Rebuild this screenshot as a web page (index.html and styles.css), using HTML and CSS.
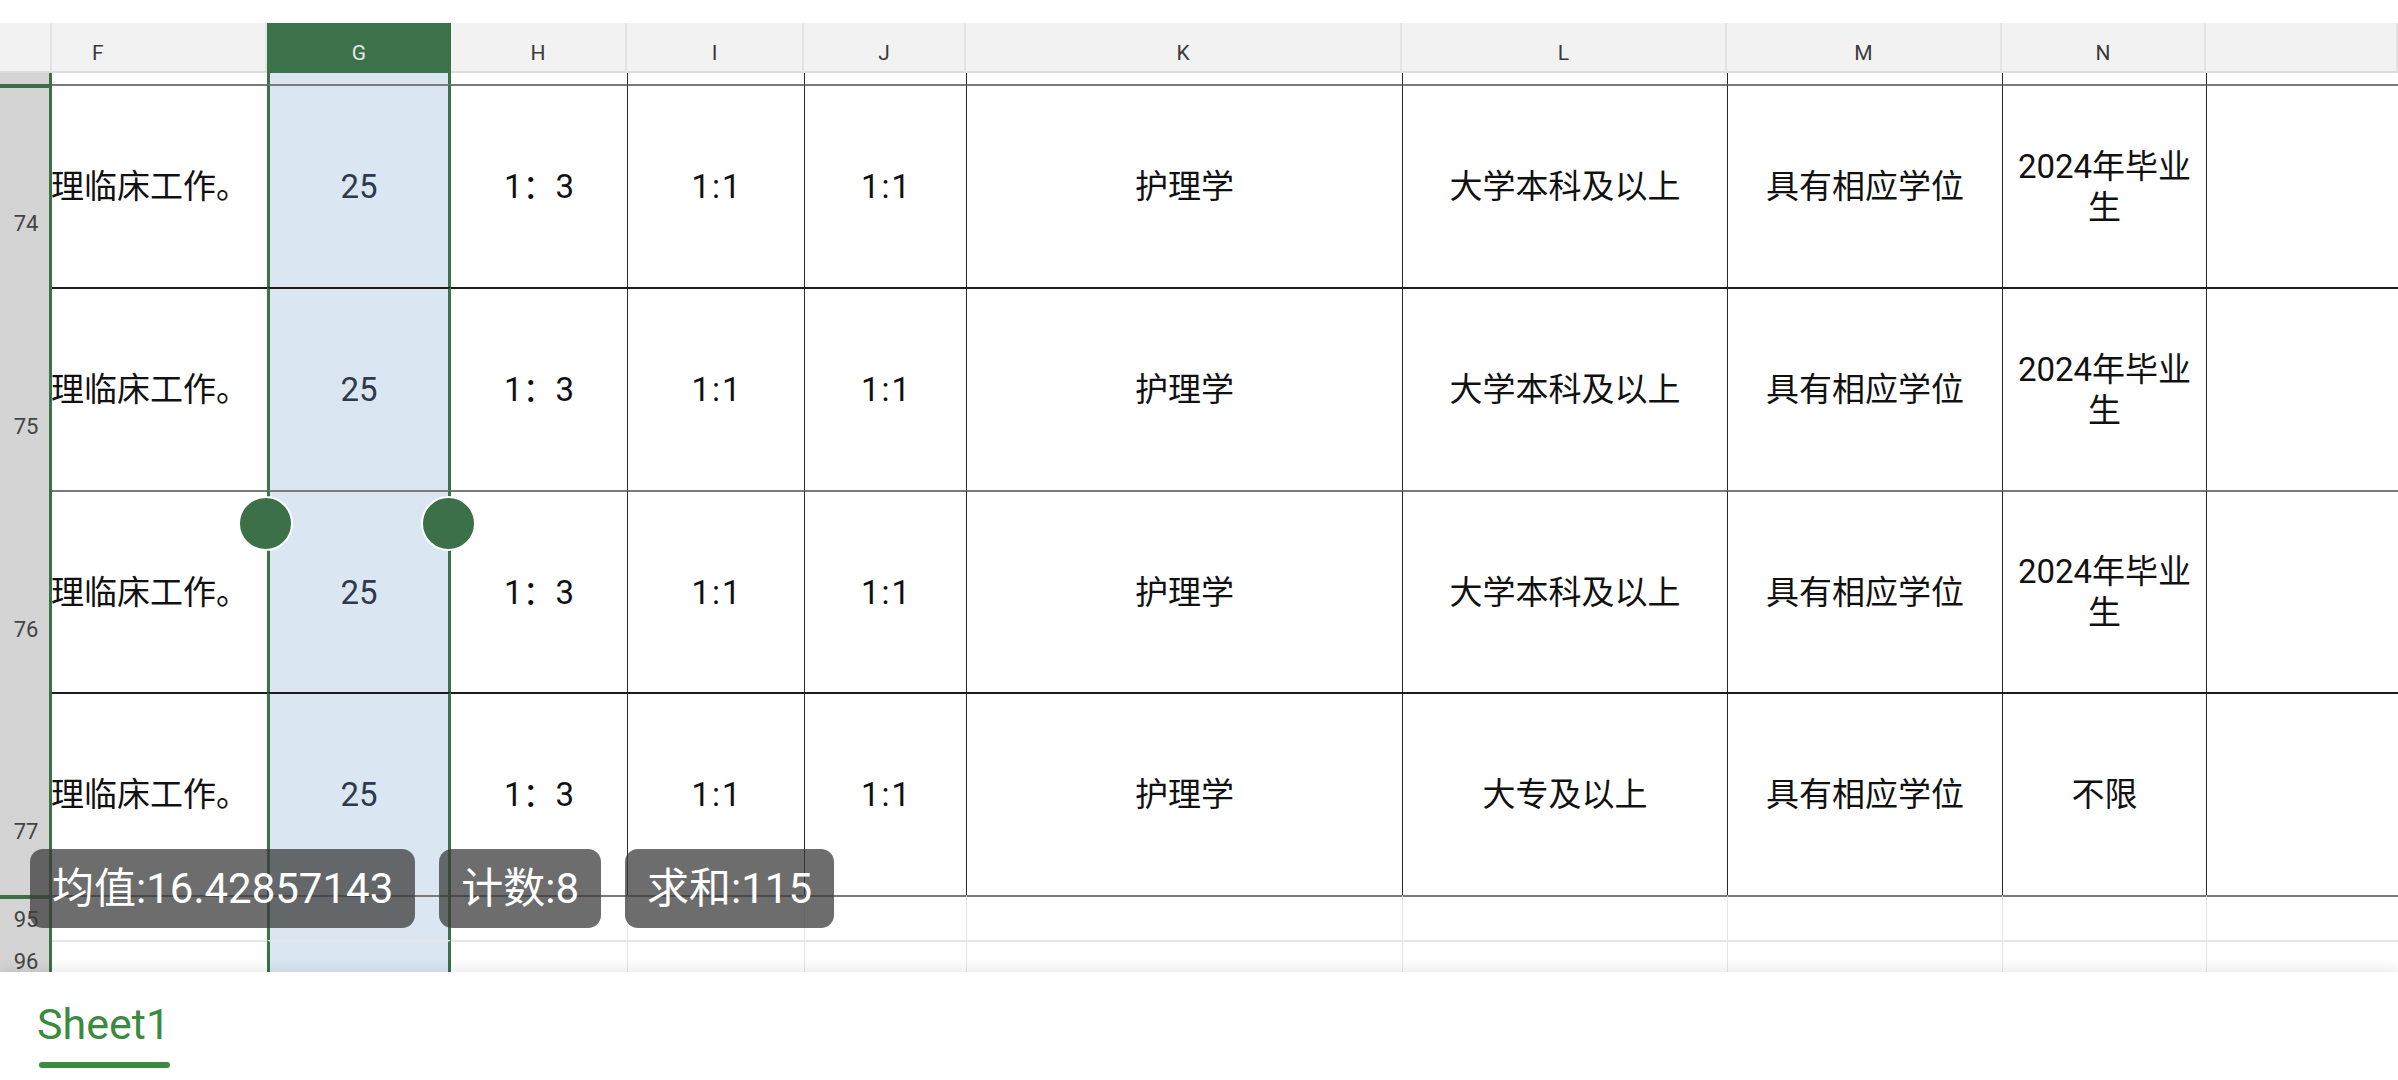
FILE: index.html
```html
<!DOCTYPE html>
<html lang="zh-CN">
<head>
<meta charset="utf-8">
<title>Sheet1</title>
<link rel="stylesheet" href="styles.css">
</head>
<body>
<div class="topbar"></div>
<div class="sheet">
  <div class="row head">
    <div class="hd corner"></div>
    <div class="hd hd-f">F</div>
    <div class="hd hd-sel">G</div>
    <div class="hd">H</div>
    <div class="hd">I</div>
    <div class="hd">J</div>
    <div class="hd">K</div>
    <div class="hd">L</div>
    <div class="hd">M</div>
    <div class="hd">N</div>
    <div class="hd"></div>
  </div>
  <div class="row partial">
    <div class="rh"></div>
    <div class="c cf"></div>
    <div class="c sel"></div>
    <div class="c after"></div>
    <div class="c"></div><div class="c"></div><div class="c"></div><div class="c"></div><div class="c"></div><div class="c"></div><div class="c"></div>
  </div>
  <div class="row r-gray green-top">
    <div class="rh big">74</div>
    <div class="c cf">理临床工作。</div>
    <div class="c sel">25</div>
    <div class="c after">1：3</div>
    <div class="c ratio">1:1</div>
    <div class="c ratio">1:1</div>
    <div class="c">护理学</div>
    <div class="c">大学本科及以上</div>
    <div class="c">具有相应学位</div>
    <div class="c wrap">2024年毕业生</div>
    <div class="c"></div>
  </div>
  <div class="row r-dark">
    <div class="rh big">75</div>
    <div class="c cf">理临床工作。</div>
    <div class="c sel">25</div>
    <div class="c after">1：3</div>
    <div class="c ratio">1:1</div>
    <div class="c ratio">1:1</div>
    <div class="c">护理学</div>
    <div class="c">大学本科及以上</div>
    <div class="c">具有相应学位</div>
    <div class="c wrap">2024年毕业生</div>
    <div class="c"></div>
  </div>
  <div class="row r-gray">
    <div class="rh big">76</div>
    <div class="c cf">理临床工作。</div>
    <div class="c sel">25</div>
    <div class="c after">1：3</div>
    <div class="c ratio">1:1</div>
    <div class="c ratio">1:1</div>
    <div class="c">护理学</div>
    <div class="c">大学本科及以上</div>
    <div class="c">具有相应学位</div>
    <div class="c wrap">2024年毕业生</div>
    <div class="c"></div>
  </div>
  <div class="row r-dark">
    <div class="rh big">77</div>
    <div class="c cf">理临床工作。</div>
    <div class="c sel">25</div>
    <div class="c after">1：3</div>
    <div class="c ratio">1:1</div>
    <div class="c ratio">1:1</div>
    <div class="c">护理学</div>
    <div class="c">大专及以上</div>
    <div class="c">具有相应学位</div>
    <div class="c">不限</div>
    <div class="c"></div>
  </div>
  <div class="row r-gray light green-top">
    <div class="rh small">95</div>
    <div class="c cf"></div>
    <div class="c sel"></div>
    <div class="c after"></div>
    <div class="c"></div><div class="c"></div><div class="c"></div><div class="c"></div><div class="c"></div><div class="c"></div><div class="c"></div>
  </div>
  <div class="row r-light light">
    <div class="rh small last">96</div>
    <div class="c cf"></div>
    <div class="c sel"></div>
    <div class="c after"></div>
    <div class="c"></div><div class="c"></div><div class="c"></div><div class="c"></div><div class="c"></div><div class="c"></div><div class="c"></div>
  </div>
</div>

<div class="handle handle-left"></div>
<div class="handle handle-right"></div>

<div class="stats">
  <div class="pill">均值:16.42857143</div>
  <div class="pill">计数:8</div>
  <div class="pill">求和:115</div>
</div>

<footer class="tabs">
  <div class="tab">Sheet1</div>
</footer>
</body>
</html>
```

FILE: styles.css
```css
* {
  box-sizing: border-box;
}

html, body {
  margin: 0;
  padding: 0;
}

body {
  width: 2398px;
  height: 1080px;
  overflow: hidden;
  background: #ffffff;
  font-family: Roboto, "Noto Sans CJK SC", sans-serif;
  color: #141414;
  position: relative;
}

.topbar {
  height: 23px;
  background: #ffffff;
}

.sheet {
  height: 949px;
  overflow: hidden;
  display: grid;
  grid-template-columns: 52px 215px 184px 176px 177px 162px 436px 325px 275px 204px 192px;
  grid-template-rows: 50px 11px 203px 203px 202px 203px 45px 45px;
}

.row {
  display: contents;
}

/* column header */
.hd {
  background: #f2f2f2;
  border-bottom: 2px solid #dddddd;
  border-right: 2px solid #e4e4e4;
  display: flex;
  align-items: center;
  justify-content: center;
  padding-top: 12px;
  font-size: 21px;
  color: #3a3a3a;
  line-height: 21px;
}

.hd.hd-f {
  justify-content: flex-start;
  padding-left: 40px;
}

.hd.hd-sel {
  background: #3c7249;
  color: #e2ebe2;
  border-right: none;
  border-bottom: 2px solid #3c7249;
}

/* row header */
.rh {
  background: #d4d4d4;
  border-right: 3px solid #3b7048;
  display: flex;
  justify-content: center;
  align-items: flex-start;
  font-size: 22px;
  line-height: 22px;
  color: #444444;
  padding-left: 3px;
}

.rh.big {
  padding-top: 129px;
}

.rh.small {
  align-items: center;
}

.rh.last {
  align-items: flex-start;
  padding-top: 11px;
}

.green-top > .rh {
  border-top: 4px solid #3b7048;
}

.green-top > .rh.big {
  padding-top: 125px;
}

/* data cells */
.c {
  background: #ffffff;
  border-left: 1px solid #2a2a2a;
  display: flex;
  align-items: center;
  justify-content: center;
  text-align: center;
  padding: 0 8px;
  font-size: 33px;
  line-height: 41px;
  color: #111111;
  overflow: hidden;
}

.c.ratio {
  letter-spacing: 2px;
  padding-left: 10px;
}

.c.cf {
  border-left: none;
  justify-content: flex-end;
  padding: 0 18px 0 0;
  white-space: nowrap;
}

.c.sel {
  background: #dae7f3;
  border-left: 3px solid #3b7048;
  border-right: 3px solid #3b7048;
  color: #2e3a4b;
}

.c.after {
  border-left: none;
}

.c.wrap {
  padding: 0 10px;
}

.r-gray > .c {
  border-top: 2px solid #7a7a7a;
}

.r-dark > .c {
  border-top: 2px solid #1c1c1c;
}

.r-light > .c {
  border-top: 2px solid #e6e6e6;
}

.light > .c {
  border-left-color: #e6e6e6;
}

.light > .c.sel {
  border-left-color: #3b7048;
}

/* selection handles */
.handle {
  position: absolute;
  top: 496px;
  width: 55px;
  height: 55px;
  border-radius: 50%;
  background: #3b7048;
  border: 2px solid #ffffff;
  z-index: 5;
}

.handle-left {
  left: 238px;
}

.handle-right {
  left: 421px;
}

/* statistics overlay */
.stats {
  position: absolute;
  left: 30px;
  top: 849px;
  display: flex;
  gap: 24px;
  z-index: 6;
}

.pill {
  height: 79px;
  padding: 0 22px;
  border-radius: 13px;
  background: rgba(58, 58, 58, 0.74);
  color: #ffffff;
  font-size: 42px;
  line-height: 79px;
  white-space: nowrap;
}

/* sheet tabs */
.tabs {
  position: relative;
  height: 108px;
  background: #ffffff;
  box-shadow: 0 -5px 10px rgba(0, 0, 0, 0.07);
  padding: 27px 0 0 37px;
  z-index: 4;
}

.tab {
  display: inline-flex;
  flex-direction: column;
  align-items: stretch;
  font-size: 43px;
  line-height: 50px;
  color: #3a8a3f;
}

.tab::after {
  content: "";
  display: block;
  height: 6px;
  margin-top: 13px;
  margin-left: 2px;
  border-radius: 3px;
  background: #3a8a3f;
}
```
